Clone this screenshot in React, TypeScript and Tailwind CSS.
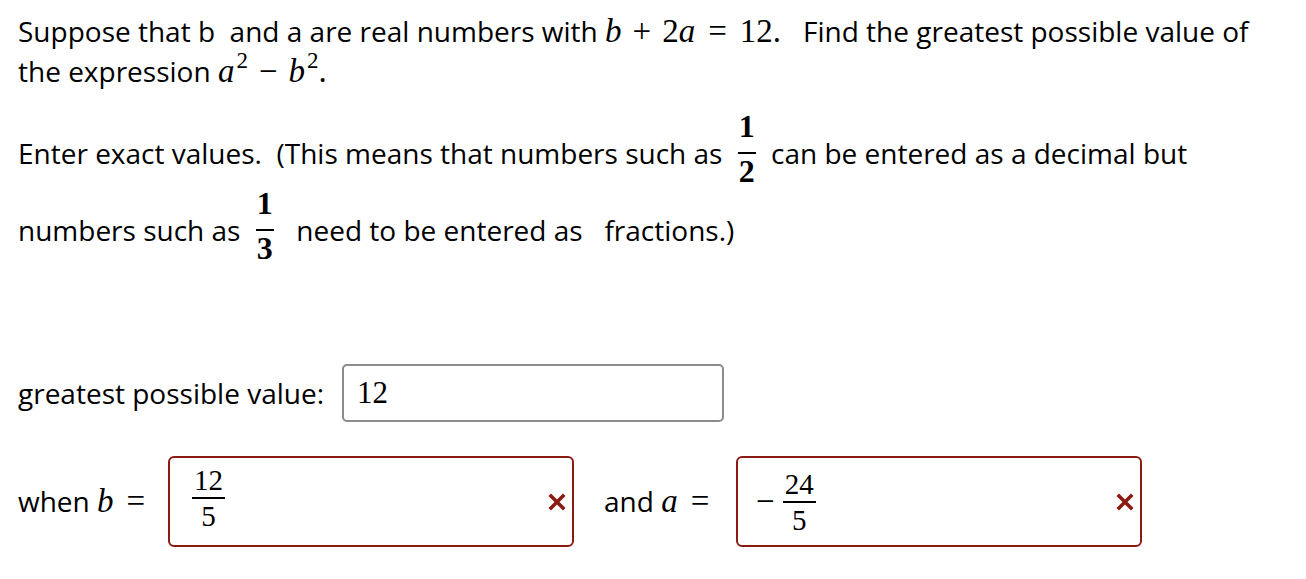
import React from "react";

const mathFont = "font-['Liberation_Serif','DejaVu_Serif',serif]";

function V({ children }: { children: React.ReactNode }) {
  return <span className={`${mathFont} italic text-[33px]`}>{children}</span>;
}
function N({ children }: { children: React.ReactNode }) {
  return <span className={`${mathFont} text-[33px]`}>{children}</span>;
}
function Bin({ children }: { children: React.ReactNode }) {
  return <span className={`${mathFont} text-[33px] mx-[11px]`}>{children}</span>;
}
function Rel({ children }: { children: React.ReactNode }) {
  return <span className={`${mathFont} text-[33px] mx-[13px]`}>{children}</span>;
}
function Sup({ children }: { children: React.ReactNode }) {
  return (
    <span className={`${mathFont} text-[23px] relative top-[-14px] ml-[2px]`}>{children}</span>
  );
}

function BigFrac({ n, d }: { n: string; d: string }) {
  return (
    <span
      className={`inline-flex flex-col items-center align-middle relative top-[-8px] mx-[8px] ${mathFont} font-bold text-[32px] leading-[28px]`}
    >
      <span className="px-[1px] pb-[12px]">{n}</span>
      <span className="h-[2px] w-full bg-black" />
      <span className="px-[1px] pt-[3px]">{d}</span>
    </span>
  );
}

function SmallFrac({ n, d }: { n: string; d: string }) {
  return (
    <span
      className={`inline-flex flex-col items-center relative top-[-4px] ${mathFont} text-[29px] leading-[26px]`}
    >
      <span className="px-[2px] pb-[4px]">{n}</span>
      <span className="h-[2px] w-full bg-black" />
      <span className="px-[2px] pt-[4px]">{d}</span>
    </span>
  );
}

function XMark() {
  return (
    <svg width="18" height="18" viewBox="0 0 18 18" className="shrink-0">
      <path d="M3 3 L15 15 M15 3 L3 15" stroke="#8b1c14" strokeWidth="3.6" strokeLinecap="square" />
    </svg>
  );
}

export default function App() {
  return (
    <div className="bg-white w-[1306px] h-[579px] px-[18px] pt-[11px] font-['Open_Sans',sans-serif] text-[28px] text-black">
      <p className="leading-[40px] whitespace-nowrap">
        Suppose that b&nbsp; and a are real numbers with <V>b</V>
        <Bin>+</Bin>
        <N>2</N>
        <V>a</V>
        <Rel>=</Rel>
        <N>12.</N>
        <span className="ml-[22px]">Find the greatest possible value of</span>
        <br />
        the expression <V>a</V>
        <Sup>2</Sup>
        <Bin>−</Bin>
        <V>b</V>
        <Sup>2</Sup>
        <N>.</N>
      </p>

      <p className="mt-[21px] leading-[75px] whitespace-nowrap">
        Enter exact values.&nbsp; (This means that numbers such as <BigFrac n="1" d="2" /> can be entered as a decimal but
        <br />
        numbers such as <BigFrac n="1" d="3" />&nbsp; need to be entered as &nbsp; fractions.)
      </p>

      <div className="mt-[94px] flex items-center">
        <span>greatest possible value:</span>
        <div className="ml-[18px] w-[382px] h-[58px] border-2 border-[#8c8c8c] rounded-[5px] flex items-center px-[13px]">
          <span className={`${mathFont} text-[31px]`}>12</span>
        </div>
      </div>

      <div className="mt-[34px] flex items-center">
        <span className="w-[150px] whitespace-nowrap">
          when <V>b</V>
          <Rel>=</Rel>
        </span>
        <div className="w-[406px] h-[91px] border-2 border-[#8b1c14] rounded-[6px] flex items-center pl-[22px] pr-[6px]">
          <SmallFrac n="12" d="5" />
          <div className="flex-1" />
          <XMark />
        </div>
        <span className="ml-[30px] w-[132px] whitespace-nowrap">
          and <V>a</V>
          <Rel>=</Rel>
        </span>
        <div className="w-[406px] h-[91px] border-2 border-[#8b1c14] rounded-[6px] flex items-center pl-[18px] pr-[6px]">
          <N>−</N>
          <span className="ml-[8px]">
            <SmallFrac n="24" d="5" />
          </span>
          <div className="flex-1" />
          <XMark />
        </div>
      </div>
    </div>
  );
}
